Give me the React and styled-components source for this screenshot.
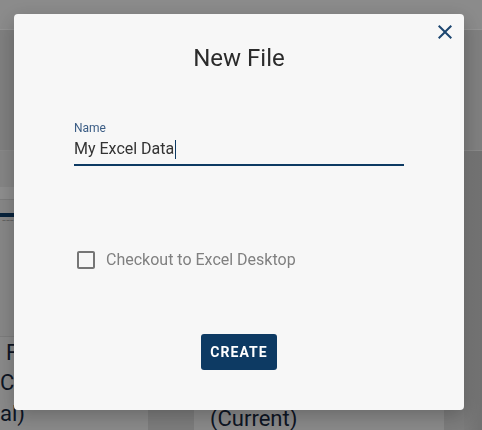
import React from 'react';
import styled, { createGlobalStyle } from 'styled-components';

const GlobalStyle = createGlobalStyle`
  html, body {
    margin: 0;
    padding: 0;
    background: #e6e6e6;
    font-family: Roboto, "Liberation Sans", Arial, sans-serif;
  }
  * {
    box-sizing: border-box;
  }
`;

const Page = styled.div`
  width: 482px;
  height: 430px;
  overflow: hidden;
  display: flex;
  flex-direction: column;
  background: #e1e1e1;
`;

const TopBar = styled.div`
  height: 30px;
  flex-shrink: 0;
  background: #e8e8e8;
  border-bottom: 1px solid #f6f6f6;
`;

const Hero = styled.div`
  height: 121px;
  flex-shrink: 0;
  background: #d4d4d4;
  border-bottom: 1px solid #e4e4e4;
`;

const Body = styled.div`
  flex: 1;
  display: flex;
`;

const Main = styled.div`
  flex: 1;
  display: flex;
  flex-direction: column;
`;

const Side = styled.div`
  width: 18px;
  flex-shrink: 0;
  background: linear-gradient(90deg, #cccccc, #bcbcbc);
`;

const Band = styled.div`
  height: ${(p) => p.h}px;
  flex-shrink: 0;
  background: ${(p) => p.bg};
  border-bottom: ${(p) => (p.line ? '1px solid #cfcfcf' : 'none')};
`;

const TabStrip = styled.div`
  height: 17px;
  flex-shrink: 0;
  display: flex;
  flex-direction: column;
  justify-content: flex-end;
  background: #e1e1e1;
`;

const TabIndicator = styled.div`
  width: 140px;
  height: 4px;
  background: #0d3a63;
`;

const TabCaption = styled.div`
  padding-left: 2px;
  font-size: 5px;
  line-height: 6px;
  color: #555;
`;

const Content = styled.div`
  flex: 1;
  background: #e1e1e1;
  border-bottom: 1px solid #cfcfcf;
`;

const Cards = styled.div`
  height: 93px;
  flex-shrink: 0;
  display: flex;
  gap: 46px;
  background: #d0d0d0;
`;

const Card = styled.div`
  width: ${(p) => p.w}px;
  flex-shrink: 0;
  background: #e6e6e6;
  font-size: 22px;
  color: #16253b;
  white-space: nowrap;
`;

const CardLine = styled.div`
  height: ${(p) => p.h}px;
  line-height: 32px;
  padding-left: ${(p) => p.indent || 0}px;
`;

const Overlay = styled.div`
  position: fixed;
  inset: 0;
  background: rgba(0, 0, 0, 0.4);
  padding: 14px 0 0 14px;
  display: flex;
  align-items: flex-start;
`;

const Modal = styled.div`
  position: relative;
  width: 450px;
  height: 396px;
  background: #f7f7f7;
  border-radius: 4px;
  box-shadow: 0 6px 20px rgba(0, 0, 0, 0.25);
  display: flex;
  flex-direction: column;
  align-items: center;
  padding-top: 28px;
`;

const CloseButton = styled.button`
  position: absolute;
  top: 6px;
  right: 7px;
  width: 24px;
  height: 24px;
  padding: 0;
  border: 0;
  background: none;
  color: #1c4670;
  cursor: pointer;
  display: flex;
`;

const Title = styled.h2`
  margin: 0;
  font-size: 24px;
  line-height: 32px;
  font-weight: 400;
  color: #2b2b2b;
`;

const Field = styled.div`
  width: 330px;
  margin-top: 46px;
`;

const FieldLabel = styled.div`
  font-size: 12px;
  line-height: 16px;
  color: #3b5d85;
`;

const FieldInput = styled.div`
  margin-top: 1px;
  padding-bottom: 3px;
  font-size: 16px;
  line-height: 24px;
  color: #333;
  border-bottom: 2px solid #0d3a63;
  display: flex;
  align-items: center;
`;

const Caret = styled.span`
  display: inline-block;
  width: 1px;
  height: 19px;
  margin-left: 1px;
  background: #0d3a63;
`;

const CheckRow = styled.label`
  width: 330px;
  margin-top: 82px;
  display: flex;
  align-items: center;
  gap: 8px;
  font-size: 16px;
  line-height: 24px;
  color: #808080;
  cursor: pointer;
`;

const CheckIcon = styled.svg`
  width: 24px;
  height: 24px;
  flex-shrink: 0;
  fill: #767676;
`;

const CreateButton = styled.button`
  margin-top: 62px;
  height: 36px;
  padding: 0 9px;
  border: 0;
  border-radius: 3px;
  background: #0d3a63;
  color: #ffffff;
  font-family: Roboto, "Liberation Sans", Arial, sans-serif;
  font-size: 14px;
  font-weight: 700;
  letter-spacing: 1.1px;
  cursor: pointer;
`;

const App = () => (
  <>
    <GlobalStyle />
    <Page>
      <TopBar />
      <Hero />
      <Body>
        <Main>
          <Band h={36} bg="#dedede" />
          <Band h={13} bg="#ececec" line />
          <TabStrip>
            <TabIndicator />
          </TabStrip>
          <TabCaption>———</TabCaption>
          <Content />
          <Cards>
            <Card w={148}>
              <CardLine h={30} indent={6}>F</CardLine>
              <CardLine h={31}>Co</CardLine>
              <CardLine h={32}>al)</CardLine>
            </Card>
            <Card w={250}>
              <CardLine h={66} />
              <CardLine h={27} indent={16}>(Current)</CardLine>
            </Card>
          </Cards>
        </Main>
        <Side />
      </Body>
    </Page>
    <Overlay>
      <Modal>
        <CloseButton aria-label="Close">
          <svg width="24" height="24" viewBox="0 0 24 24" fill="currentColor">
            <path d="M19 6.41L17.59 5 12 10.59 6.41 5 5 6.41 10.59 12 5 17.59 6.41 19 12 13.41 17.59 19 19 17.59 13.41 12z" />
          </svg>
        </CloseButton>
        <Title>New File</Title>
        <Field>
          <FieldLabel>Name</FieldLabel>
          <FieldInput>
            My Excel Data
            <Caret />
          </FieldInput>
        </Field>
        <CheckRow>
          <CheckIcon viewBox="0 0 24 24">
            <path d="M19 5v14H5V5h14m0-2H5c-1.1 0-2 .9-2 2v14c0 1.1.9 2 2 2h14c1.1 0 2-.9 2-2V5c0-1.1-.9-2-2-2z" />
          </CheckIcon>
          Checkout to Excel Desktop
        </CheckRow>
        <CreateButton>CREATE</CreateButton>
      </Modal>
    </Overlay>
  </>
);

export default App;
